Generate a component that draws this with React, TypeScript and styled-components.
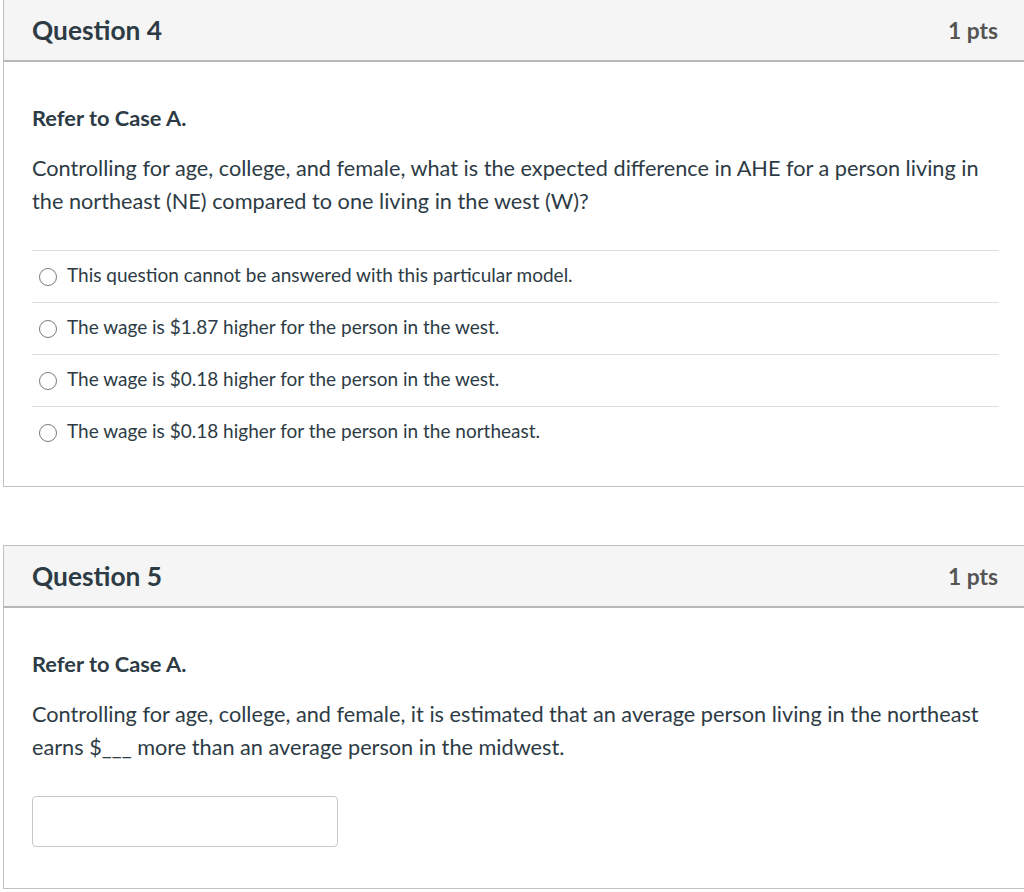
import { FC } from 'react';
import styled, { createGlobalStyle } from 'styled-components';

const GlobalStyle = createGlobalStyle`
  html, body {
    margin: 0;
    padding: 0;
    background: #fff;
    overflow: hidden;
  }
  body {
    font-family: Lato, "Open Sans", "Liberation Sans", sans-serif;
    color: #2d3b45;
  }
`;

const Page = styled.div`
  padding-left: 3px;
  display: flex;
  flex-direction: column;
  gap: 58px;
  margin-top: -1px;
`;

const Card = styled.section`
  border: 1px solid #c1c1c1;
  border-right: none;
  width: calc(100% + 4px);
  box-sizing: border-box;
`;

const Header = styled.header<{ $height: number }>`
  height: ${(p) => p.$height}px;
  background: #f5f5f5;
  border-bottom: 2px solid #b8b8b8;
  display: flex;
  align-items: center;
  justify-content: space-between;
  padding: 0 26px 0 28px;
  box-sizing: border-box;
  width: 1021px;
`;

const Title = styled.h2`
  margin: 0;
  font-size: 26.3px;
  font-weight: 700;
  color: #2d3b45;
`;

const Points = styled.div`
  font-size: 22.8px;
  font-weight: 700;
  color: #555;
  margin-right: 1px;
`;

const Body = styled.div<{ $bottom: number }>`
  padding: 39px 26px ${(p) => p.$bottom}px 28px;
  width: 1021px;
  box-sizing: border-box;
`;

const Lead = styled.p`
  margin: 0 0 18px;
  font-size: 21.8px;
  font-weight: 700;
  line-height: 33px;
`;

const Prompt = styled.p`
  margin: 0;
  font-size: 21.7px;
  line-height: 33px;
`;

const Answers = styled.ul`
  list-style: none;
  margin: 32px 0 0;
  padding: 0;
`;

const Answer = styled.li`
  height: 52px;
  border-top: 1px solid #dedede;
  display: flex;
  align-items: center;
  gap: 10px;
  padding-left: 7px;
  box-sizing: border-box;
  font-size: 19px;
`;

const Label = styled.span`
  margin-top: -5px;
`;

const Radio = styled.span`
  width: 16px;
  height: 16px;
  border: 1.3px solid #7a7a7a;
  border-radius: 50%;
  background: #fff;
  flex-shrink: 0;
`;

const TextInput = styled.input`
  display: block;
  margin-top: 32px;
  width: 306px;
  height: 51px;
  box-sizing: border-box;
  border: 1px solid #c8c8c8;
  border-radius: 4px;
  background: #fff;
`;

const answers = [
  'This question cannot be answered with this particular model.',
  'The wage is $1.87 higher for the person in the west.',
  'The wage is $0.18 higher for the person in the west.',
  'The wage is $0.18 higher for the person in the northeast.',
];

const App: FC = () => (
  <>
    <GlobalStyle />
    <Page>
      <Card>
        <Header $height={62}>
          <Title>Question 4</Title>
          <Points>1 pts</Points>
        </Header>
        <Body $bottom={28}>
          <Lead>Refer to Case A.</Lead>
          <Prompt>
            Controlling for age, college, and female, what is the expected difference in AHE for a person living in
            the northeast (NE) compared to one living in the west (W)?
          </Prompt>
          <Answers>
            {answers.map((a) => (
              <Answer key={a}>
                <Radio />
                <Label>{a}</Label>
              </Answer>
            ))}
          </Answers>
        </Body>
      </Card>
      <Card>
        <Header $height={62}>
          <Title>Question 5</Title>
          <Points>1 pts</Points>
        </Header>
        <Body $bottom={41}>
          <Lead>Refer to Case A.</Lead>
          <Prompt>
            Controlling for age, college, and female, it is estimated that an average person living in the northeast
            earns $___ more than an average person in the midwest.
          </Prompt>
          <TextInput type="text" />
        </Body>
      </Card>
    </Page>
  </>
);

export default App;
